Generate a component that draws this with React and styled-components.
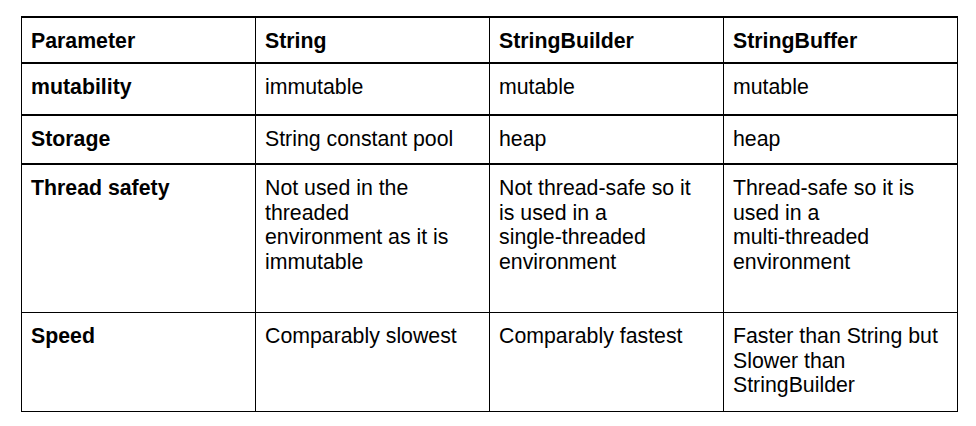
import React from 'react';
import styled, { createGlobalStyle } from 'styled-components';

const GlobalStyle = createGlobalStyle`
  html, body {
    margin: 0;
    padding: 0;
    background: #fff;
  }
`;

const Page = styled.div`
  padding: 16px 0 0 21px;
  font-family: "Liberation Sans", Arial, sans-serif;
  color: #000;
`;

const Grid = styled.div`
  display: grid;
  grid-template-columns: repeat(4, 234px);
  width: 937px;
  box-sizing: border-box;
  border-left: 1px solid #000;
  border-top: 2px solid #000;
`;

const Cell = styled.div`
  box-sizing: border-box;
  height: ${props => props.$height}px;
  padding: 11px 17.5px 0 9px;
  border-right: 1px solid #000;
  border-bottom: ${props => props.$bottom}px solid #000;
  font-size: 21.3px;
  line-height: 24.5px;
  font-weight: ${props => (props.$bold ? 700 : 400)};
`;

const NoBreak = styled.span`
  white-space: nowrap;
`;

const header = ['Parameter', 'String', 'StringBuilder', 'StringBuffer'];

const rows = [
  { height: 52, bottom: 2, cells: ['mutability', 'immutable', 'mutable', 'mutable'] },
  { height: 49, bottom: 2, cells: ['Storage', 'String constant pool', 'heap', 'heap'] },
  {
    height: 148,
    bottom: 1,
    cells: [
      'Thread safety',
      'Not used in the threaded environment as it is immutable',
      <>Not thread-safe so it is used in a <NoBreak>single-threaded</NoBreak> environment</>,
      <>Thread-safe so it is used in a <NoBreak>multi-threaded</NoBreak> environment</>,
    ],
  },
  {
    height: 99,
    bottom: 1,
    cells: [
      'Speed',
      'Comparably slowest',
      'Comparably fastest',
      'Faster than String but Slower than StringBuilder',
    ],
  },
];

const App = () => (
  <>
    <GlobalStyle />
    <Page>
      <Grid>
        {header.map(h => (
          <Cell key={h} $height={46} $bottom={2} $bold>
            {h}
          </Cell>
        ))}
        {rows.map((row, r) =>
          row.cells.map((text, i) => (
            <Cell key={`${r}-${i}`} $height={row.height} $bottom={row.bottom} $bold={i === 0}>
              {text}
            </Cell>
          ))
        )}
      </Grid>
    </Page>
  </>
);

export default App;
